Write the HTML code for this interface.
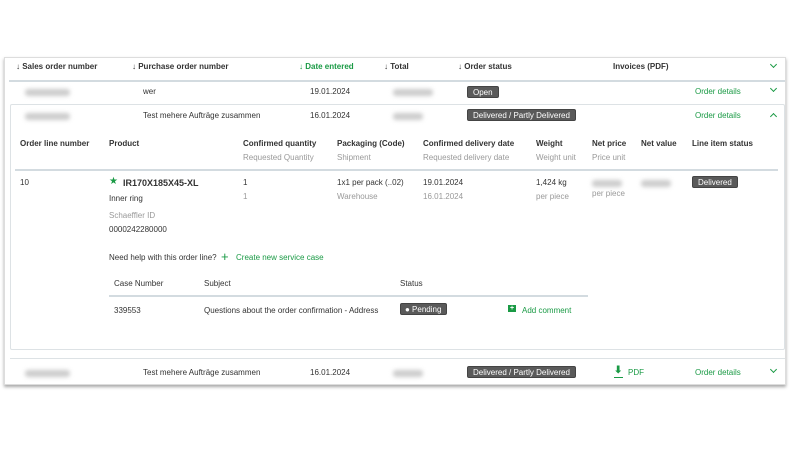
<!DOCTYPE html>
<html><head><meta charset="utf-8"><style>
*{margin:0;padding:0;box-sizing:border-box}
body{width:800px;height:450px;background:#fff;font-family:"Liberation Sans",Arial,sans-serif;font-size:8px;color:#333;position:relative;overflow:hidden}
.a{position:absolute;white-space:nowrap;line-height:10px}
.b{font-weight:bold}
.g{color:#1a9a45}
.l{color:#999}
.blur{position:absolute;height:7px;background:#ccc;filter:blur(2px);border-radius:3px}
.badge{position:absolute;background:#5a5a5a;color:#fff;border-radius:2px;padding:0 5px;height:12px;line-height:12px;border:1px solid #444;font-size:8px}
.hl{position:absolute;height:2px;background:#d3dbe0}
.chev{position:absolute;width:5px;height:5px;border-right:1.5px solid #1a9a45;border-bottom:1.5px solid #1a9a45;transform:rotate(45deg)}
.chevu{position:absolute;width:5px;height:5px;border-left:1.5px solid #1a9a45;border-top:1.5px solid #1a9a45;transform:rotate(45deg)}
</style></head><body>
<div style="position:absolute;left:4px;top:57px;width:782px;height:328px;border:1px solid #ddd;box-shadow:0 2px 3px rgba(0,0,0,.35);background:#fff"></div>
<div style="position:absolute;left:10px;top:104px;width:775px;height:246px;border:1px solid #dde2e5;border-radius:2px"></div>

<div class="a b" style="left:16px;top:62px">↓ Sales order number</div>
<div class="a b" style="left:132px;top:62px">↓ Purchase order number</div>
<div class="a b g" style="left:299px;top:62px">↓ Date entered</div>
<div class="a b" style="left:384px;top:62px">↓ Total</div>
<div class="a b" style="left:458px;top:62px">↓ Order status</div>
<div class="a b" style="left:613px;top:62px">Invoices (PDF)</div>
<div class="chev" style="left:771px;top:62px"></div>
<div class="hl" style="left:9px;top:80px;width:776px"></div>

<div class="blur" style="left:25px;top:89px;width:45px"></div>
<div class="a" style="left:143px;top:87px">wer</div>
<div class="a" style="left:310px;top:87px">19.01.2024</div>
<div class="blur" style="left:393px;top:89px;width:40px"></div>
<div class="badge" style="left:467px;top:86px">Open</div>
<div class="a g" style="left:695px;top:87px">Order details</div>
<div class="chev" style="left:771px;top:86px"></div>

<div class="blur" style="left:25px;top:113px;width:45px"></div>
<div class="a" style="left:143px;top:111px">Test mehere Aufträge zusammen</div>
<div class="a" style="left:310px;top:111px">16.01.2024</div>
<div class="blur" style="left:393px;top:113px;width:30px"></div>
<div class="badge" style="left:467px;top:109px">Delivered / Partly Delivered</div>
<div class="a g" style="left:695px;top:111px">Order details</div>
<div class="chevu" style="left:771px;top:114px"></div>

<div class="a b" style="left:20px;top:139px">Order line number</div>
<div class="a b" style="left:109px;top:139px">Product</div>
<div class="a b" style="left:243px;top:139px">Confirmed quantity</div>
<div class="a l" style="left:243px;top:153px">Requested Quantity</div>
<div class="a b" style="left:337px;top:139px">Packaging (Code)</div>
<div class="a l" style="left:337px;top:153px">Shipment</div>
<div class="a b" style="left:423px;top:139px">Confirmed delivery date</div>
<div class="a l" style="left:423px;top:153px">Requested delivery date</div>
<div class="a b" style="left:536px;top:139px">Weight</div>
<div class="a l" style="left:536px;top:153px">Weight unit</div>
<div class="a b" style="left:592px;top:139px">Net price</div>
<div class="a l" style="left:592px;top:153px">Price unit</div>
<div class="a b" style="left:641px;top:139px">Net value</div>
<div class="a b" style="left:692px;top:139px">Line item status</div>
<div class="hl" style="left:15px;top:169px;width:763px"></div>

<div class="a" style="left:20px;top:178px">10</div>
<div class="a g" style="left:109px;top:177px;font-size:10px">★</div>
<div class="a b" style="left:123px;top:178px;font-size:9px">IR170X185X45-XL</div>
<div class="a" style="left:109px;top:194px">Inner ring</div>
<div class="a l" style="left:109px;top:211px">Schaeffler ID</div>
<div class="a" style="left:109px;top:225px">0000242280000</div>
<div class="a" style="left:243px;top:178px">1</div>
<div class="a l" style="left:243px;top:192px">1</div>
<div class="a" style="left:337px;top:178px">1x1 per pack (..02)</div>
<div class="a l" style="left:337px;top:192px">Warehouse</div>
<div class="a" style="left:423px;top:178px">19.01.2024</div>
<div class="a l" style="left:423px;top:192px">16.01.2024</div>
<div class="a" style="left:536px;top:178px">1,424 kg</div>
<div class="a l" style="left:536px;top:192px">per piece</div>
<div class="blur" style="left:592px;top:180px;width:30px"></div>
<div class="a l" style="left:592px;top:189px">per piece</div>
<div class="blur" style="left:641px;top:180px;width:30px"></div>
<div class="badge" style="left:692px;top:176px">Delivered</div>

<div class="a" style="left:109px;top:253px">Need help with this order line?</div>
<div class="a g" style="left:221px;top:250px;font-size:13px;line-height:14px">+</div>
<div class="a g" style="left:236px;top:253px">Create new service case</div>

<div class="a" style="left:114px;top:279px">Case Number</div>
<div class="a" style="left:204px;top:279px">Subject</div>
<div class="a" style="left:400px;top:279px">Status</div>
<div class="hl" style="left:109px;top:295px;width:479px"></div>
<div class="a" style="left:114px;top:306px">339553</div>
<div class="a" style="left:204px;top:306px">Questions about the order confirmation - Address</div>
<div class="badge" style="left:400px;top:303px;padding-left:4px">● Pending</div>
<div style="position:absolute;left:508px;top:305px;width:8px;height:7px;background:#1a9a45;color:#fff;font-size:7px;line-height:7px;text-align:center;font-weight:bold">+</div>
<div class="a g" style="left:522px;top:306px">Add comment</div>

<div class="hl" style="left:10px;top:358px;width:775px;height:1px;background:#dde2e5"></div>
<div class="blur" style="left:25px;top:370px;width:45px"></div>
<div class="a" style="left:143px;top:368px">Test mehere Aufträge zusammen</div>
<div class="a" style="left:310px;top:368px">16.01.2024</div>
<div class="blur" style="left:393px;top:370px;width:30px"></div>
<div class="badge" style="left:467px;top:366px">Delivered / Partly Delivered</div>
<div class="a g b" style="left:614px;top:366px;font-size:10px">⬇</div>
<div style="position:absolute;left:614px;top:377px;width:9px;height:1px;background:#1a9a45"></div>
<div class="a g" style="left:628px;top:368px">PDF</div>
<div class="a g" style="left:695px;top:368px">Order details</div>
<div class="chev" style="left:771px;top:367px"></div>
</body></html>
